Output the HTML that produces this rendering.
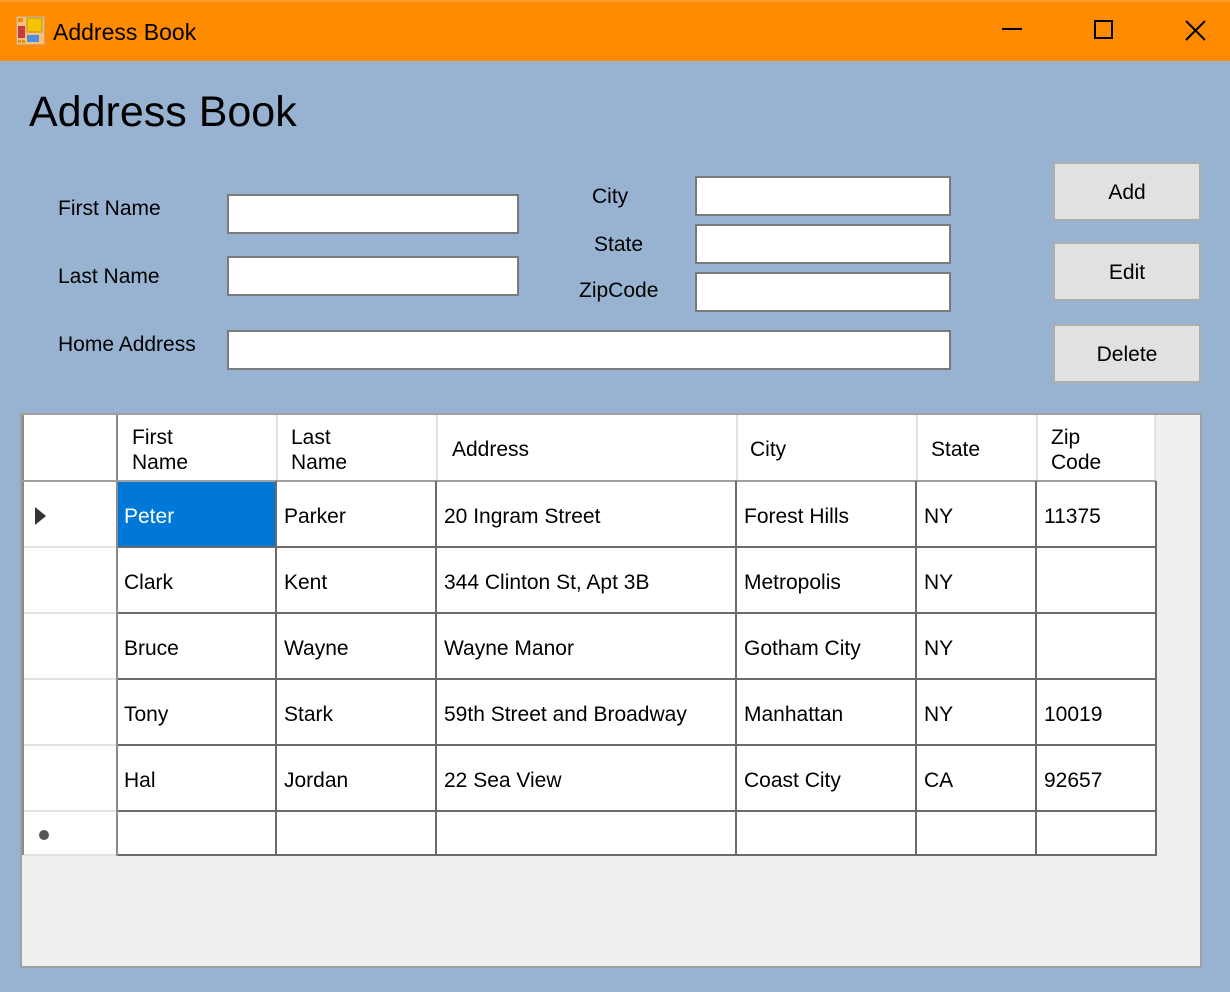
<!DOCTYPE html>
<html><head><style>
*{margin:0;padding:0;box-sizing:border-box}
body{width:1230px;height:992px;background:#98b3d1;font-family:"Liberation Sans",sans-serif;position:relative;overflow:hidden;color:#000}
.a{position:absolute}
.t{font-size:21px;white-space:nowrap}
.tb{position:absolute;background:#fff;border:2px solid #7a7a7a}
.btn{position:absolute;left:1053px;width:148px;height:59px;background:#e1e1e1;border:2px solid #adadad;font-size:21px;text-align:center;line-height:57px}
.c{position:absolute;font-size:21px;white-space:nowrap}
.hl{position:absolute;height:2px;background:#6b6b6b}
.vl{position:absolute;width:2px;background:#6b6b6b}
</style></head><body>
<div class="a" style="left:0;top:0;width:1230px;height:61px;background:#ff8c00;border-top:2px solid #ff9a22"></div>
<svg class="a" style="left:16px;top:16px" width="30" height="30" viewBox="0 0 30 30">
<rect x="0.5" y="0.5" width="28" height="28" fill="#f4c07a" stroke="#cfa070"/>
<rect x="2" y="2" width="5" height="4" fill="#f08a00"/><rect x="2" y="10" width="7" height="12" fill="#c83a3a"/>
<rect x="11" y="2" width="15" height="14" fill="#f5c400" stroke="#c09020"/><rect x="11" y="19" width="12" height="7" fill="#4f8fe0"/>
<rect x="2" y="24" width="3" height="3" fill="#f08a00"/><rect x="6" y="24" width="3" height="3" fill="#f08a00"/>
</svg>
<div class="a" style="left:53px;top:19px;font-size:23px">Address Book</div>
<div class="a" style="left:1002px;top:28px;width:20px;height:2px;background:#000"></div>
<div class="a" style="left:1094px;top:20px;width:19px;height:19px;border:2px solid #000"></div>
<svg class="a" style="left:1185px;top:20px" width="21" height="21"><path d="M1 1L20 20M20 1L1 20" stroke="#000" stroke-width="2"/></svg>

<div class="a" style="left:29px;top:88px;font-size:43px">Address Book</div>

<div class="a t" style="left:58px;top:197px">First Name</div>
<div class="a t" style="left:58px;top:265px">Last Name</div>
<div class="a t" style="left:58px;top:333px">Home Address</div>
<div class="a t" style="left:592px;top:185px">City</div>
<div class="a t" style="left:594px;top:233px">State</div>
<div class="a t" style="left:579px;top:279px">ZipCode</div>
<div class="tb" style="left:227px;top:194px;width:292px;height:40px"></div>
<div class="tb" style="left:227px;top:256px;width:292px;height:40px"></div>
<div class="tb" style="left:227px;top:330px;width:724px;height:40px"></div>
<div class="tb" style="left:695px;top:176px;width:256px;height:40px"></div>
<div class="tb" style="left:695px;top:224px;width:256px;height:40px"></div>
<div class="tb" style="left:695px;top:272px;width:256px;height:40px"></div>
<div class="btn" style="top:162px">Add</div>
<div class="btn" style="top:242px">Edit</div>
<div class="btn" style="top:324px">Delete</div>

<div class="a" style="left:20px;top:413px;width:1182px;height:555px;background:#efefef;border:2px solid #a0a0a0"></div>
<div class="a" style="left:22px;top:415px;width:1134px;height:440px;background:#fff"></div>
<div class="a" style="left:22px;top:415px;width:2px;height:440px;background:#8a8a8a"></div>
<div class="a" style="left:116px;top:481px;width:160px;height:66px;background:#0078d7"></div>
<div class="a" style="left:116px;top:415px;width:2px;height:66px;background:#8a8a8a"></div>
<div class="a" style="left:276px;top:415px;width:2px;height:66px;background:#e3e3e3"></div>
<div class="a" style="left:436px;top:415px;width:2px;height:66px;background:#e3e3e3"></div>
<div class="a" style="left:736px;top:415px;width:2px;height:66px;background:#e3e3e3"></div>
<div class="a" style="left:916px;top:415px;width:2px;height:66px;background:#e3e3e3"></div>
<div class="a" style="left:1036px;top:415px;width:2px;height:66px;background:#e3e3e3"></div>
<div class="a" style="left:1154px;top:415px;width:2px;height:66px;background:#e3e3e3"></div>
<div class="a" style="left:22px;top:480px;width:1134px;height:2px;background:#a0a0a0"></div>
<div class="a" style="left:24px;top:546px;width:92px;height:2px;background:#e3e3e3"></div>
<div class="a" style="left:24px;top:612px;width:92px;height:2px;background:#e3e3e3"></div>
<div class="a" style="left:24px;top:678px;width:92px;height:2px;background:#e3e3e3"></div>
<div class="a" style="left:24px;top:744px;width:92px;height:2px;background:#e3e3e3"></div>
<div class="a" style="left:24px;top:810px;width:92px;height:2px;background:#e3e3e3"></div>
<div class="a" style="left:24px;top:854px;width:92px;height:2px;background:#e3e3e3"></div>
<div class="hl" style="left:116px;top:546px;width:1040px"></div>
<div class="hl" style="left:116px;top:612px;width:1040px"></div>
<div class="hl" style="left:116px;top:678px;width:1040px"></div>
<div class="hl" style="left:116px;top:744px;width:1040px"></div>
<div class="hl" style="left:116px;top:810px;width:1040px"></div>
<div class="hl" style="left:116px;top:854px;width:1040px"></div>
<div class="vl" style="left:116px;top:481px;height:375px;background:#8a8a8a"></div>
<div class="vl" style="left:275px;top:481px;height:375px"></div>
<div class="vl" style="left:435px;top:481px;height:375px"></div>
<div class="vl" style="left:735px;top:481px;height:375px"></div>
<div class="vl" style="left:915px;top:481px;height:375px"></div>
<div class="vl" style="left:1035px;top:481px;height:375px"></div>
<div class="vl" style="left:1155px;top:481px;height:375px"></div>

<svg class="a" style="left:35px;top:507px" width="12" height="18"><path d="M0 0L11 9L0 18Z" fill="#333"/></svg>
<div class="a" style="left:39px;top:830px;width:10px;height:10px;border-radius:50%;background:#555"></div>

<div class="c" style="left:132px;top:425px;line-height:25px">First<br>Name</div>
<div class="c" style="left:291px;top:425px;line-height:25px">Last<br>Name</div>
<div class="c" style="left:452px;top:438px">Address</div>
<div class="c" style="left:750px;top:438px">City</div>
<div class="c" style="left:931px;top:438px">State</div>
<div class="c" style="left:1051px;top:425px;line-height:25px">Zip<br>Code</div>

<div class="c" style="left:124px;top:505px;color:#fff">Peter</div>
<div class="c" style="left:284px;top:505px">Parker</div>
<div class="c" style="left:444px;top:505px">20 Ingram Street</div>
<div class="c" style="left:744px;top:505px">Forest Hills</div>
<div class="c" style="left:924px;top:505px">NY</div>
<div class="c" style="left:1044px;top:505px">11375</div>

<div class="c" style="left:124px;top:571px">Clark</div>
<div class="c" style="left:284px;top:571px">Kent</div>
<div class="c" style="left:444px;top:571px">344 Clinton St, Apt 3B</div>
<div class="c" style="left:744px;top:571px">Metropolis</div>
<div class="c" style="left:924px;top:571px">NY</div>

<div class="c" style="left:124px;top:637px">Bruce</div>
<div class="c" style="left:284px;top:637px">Wayne</div>
<div class="c" style="left:444px;top:637px">Wayne Manor</div>
<div class="c" style="left:744px;top:637px">Gotham City</div>
<div class="c" style="left:924px;top:637px">NY</div>

<div class="c" style="left:124px;top:703px">Tony</div>
<div class="c" style="left:284px;top:703px">Stark</div>
<div class="c" style="left:444px;top:703px">59th Street and Broadway</div>
<div class="c" style="left:744px;top:703px">Manhattan</div>
<div class="c" style="left:924px;top:703px">NY</div>
<div class="c" style="left:1044px;top:703px">10019</div>

<div class="c" style="left:124px;top:769px">Hal</div>
<div class="c" style="left:284px;top:769px">Jordan</div>
<div class="c" style="left:444px;top:769px">22 Sea View</div>
<div class="c" style="left:744px;top:769px">Coast City</div>
<div class="c" style="left:924px;top:769px">CA</div>
<div class="c" style="left:1044px;top:769px">92657</div>
</body></html>
